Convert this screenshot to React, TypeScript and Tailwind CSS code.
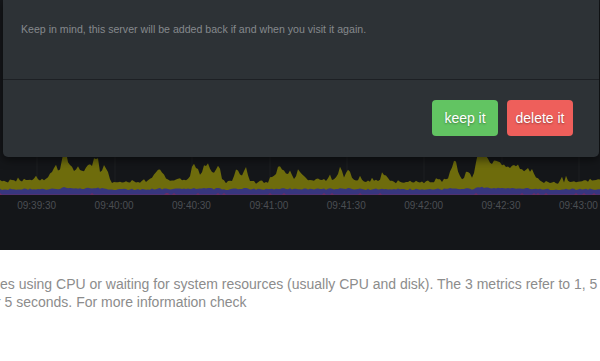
import { useMemo } from "react";

const W = 600;
const H = 44;

type Peak = { x: number; h: number; w: number };

const peaks: Peak[] = [
  { x: 55, h: 14, w: 6 },
  { x: 64, h: 30, w: 3 },
  { x: 70, h: 14, w: 5 },
  { x: 78, h: 12, w: 4 },
  { x: 90, h: 22, w: 6 },
  { x: 97, h: 16, w: 3 },
  { x: 105, h: 16, w: 4 },
  { x: 158, h: 10, w: 6 },
  { x: 195, h: 16, w: 4 },
  { x: 207, h: 18, w: 5 },
  { x: 217, h: 14, w: 4 },
  { x: 237, h: 13, w: 3 },
  { x: 245, h: 11, w: 4 },
  { x: 280, h: 16, w: 6 },
  { x: 290, h: 9, w: 3 },
  { x: 300, h: 11, w: 4 },
  { x: 340, h: 12, w: 3 },
  { x: 348, h: 11, w: 3 },
  { x: 385, h: 6, w: 6 },
  { x: 455, h: 20, w: 4 },
  { x: 468, h: 9, w: 3 },
  { x: 480, h: 26, w: 5 },
  { x: 488, h: 17, w: 8 },
  { x: 500, h: 16, w: 8 },
  { x: 515, h: 16, w: 8 },
  { x: 530, h: 12, w: 8 },
];

function buildSeries() {
  let seed = 17;
  const rnd = () => {
    seed = (seed * 1103515245 + 12345) % 2147483648;
    return seed / 2147483648;
  };
  const pts: { x: number; top: number; blue: number; red: number }[] = [];
  for (let x = 0; x <= W; x += 2) {
    let v = 7 + rnd() * 2.5 + Math.sin(x / 23) * 1.2;
    if (rnd() > 0.88) v += rnd() * 5;
    for (const p of peaks) {
      const d = (x - p.x) / p.w;
      v += p.h * Math.exp(-d * d) * (0.75 + rnd() * 0.35);
    }
    const b = 4.5 + rnd() * 1.5 + v * 0.06;
    pts.push({ x, top: v, blue: b, red: rnd() > 0.93 ? 2 : 0.4 });
  }
  return pts;
}

function area(pts: { x: number; y: number }[]) {
  let d = `M0 ${H}`;
  for (const p of pts) d += ` L${p.x} ${(H - p.y).toFixed(1)}`;
  d += ` L${W} ${H} Z`;
  return d;
}

function LoadChart() {
  const series = useMemo(buildSeries, []);
  const yellow = area(series.map((p) => ({ x: p.x, y: p.top + p.blue })));
  const blue = area(series.map((p) => ({ x: p.x, y: p.blue })));
  const red = area(series.map((p) => ({ x: p.x, y: p.red })));
  const grid = [37, 115, 192, 270, 347, 424, 502, 579];

  return (
    <svg width={W} height={H} viewBox={`0 0 ${W} ${H}`} className="block">
      {grid.map((g) => (
        <line key={g} x1={g} x2={g} y1={0} y2={H} stroke="#1c1f23" strokeWidth={1} />
      ))}
      <path d={yellow} fill="#6e6c0c" />
      <path d={blue} fill="#37367e" />
      <path d={red} fill="#6a2c66" />
    </svg>
  );
}

const labels = ["09:39:30", "09:40:00", "09:40:30", "09:41:00", "09:41:30", "09:42:00", "09:42:30", "09:43:00"];

export default function App() {
  return (
    <div className="relative h-[361px] w-[600px] overflow-hidden bg-white font-['Liberation_Sans',Arial,sans-serif]">
      <section className="flex h-[250px] flex-col justify-end bg-[#141619] pb-[38px]">
        <LoadChart />
        <div className="-ml-[2px] mt-[5px] flex whitespace-nowrap">
          {labels.map((l) => (
            <span key={l} className="w-[77.4px] shrink-0 text-center text-[10px] leading-[12px] text-[#4b4e53]">
              {l}
            </span>
          ))}
        </div>
      </section>

      <section className="overflow-hidden pt-[25px] text-[14px] leading-[18px] text-[#8c8c8c]">
        <p className="whitespace-nowrap">
          es using CPU or waiting for system resources (usually CPU and disk). The 3 metrics refer to 1, 5 and 15 minute averages.
        </p>
        <p className="-ml-[4px] whitespace-nowrap">r 5 seconds. For more information check</p>
      </section>

      <div className="absolute left-[3px] right-[1px] top-0 flex h-[157px] flex-col rounded-b-[5px] bg-[#2d3236] shadow-[0_3px_8px_rgba(0,0,0,0.5)]">
        <div className="h-[80px] border-b border-[#1d2024] px-[18px] pt-[22px]">
          <p className="text-[10.6px] leading-[14px] text-[#85898d]">
            Keep in mind, this server will be added back if and when you visit it again.
          </p>
        </div>
        <div className="flex flex-1 justify-end gap-[9px] pr-[26px] pt-[20px]">
          <button className="h-[36px] w-[66px] rounded-[4px] bg-[#62c462] text-[14px] text-white [text-shadow:0_1px_2px_rgba(0,0,0,0.35)]">
            keep it
          </button>
          <button className="h-[36px] w-[66px] rounded-[4px] bg-[#ee5f5b] text-[14px] text-white [text-shadow:0_1px_2px_rgba(0,0,0,0.35)]">
            delete it
          </button>
        </div>
      </div>
    </div>
  );
}
